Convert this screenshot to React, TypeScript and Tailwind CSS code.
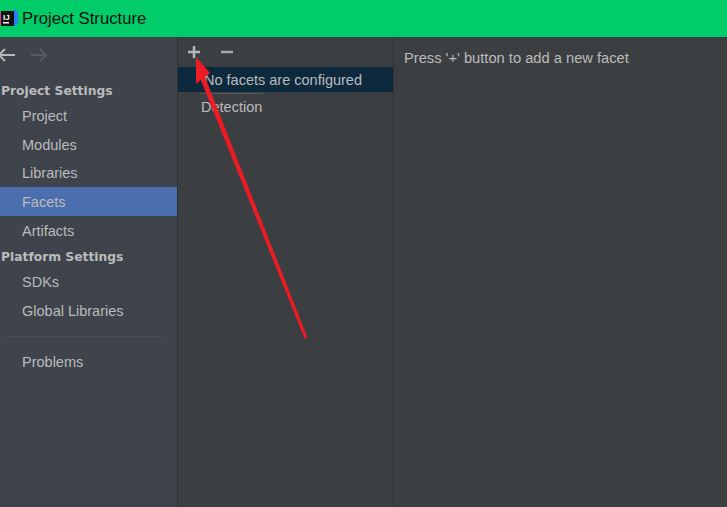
const navRow = 'flex h-[28.67px] items-center pl-[22px] pt-[2px]'
const heading = "flex items-center pl-px font-['DejaVu_Sans'] text-[12.3px] font-bold text-[#bbbbbb]"

function AppIcon() {
	return (
		<svg width="26" height="37" viewBox="0 0 26 37" className="shrink-0">
			<path d="M0 14 L3 12 L3 26 L0 24 Z" fill="#e8416f" />
			<path d="M13 10 H16 L18 13 V23 L15 26 H13 Z" fill="#2d7cf6" />
			<rect x="1" y="11" width="13" height="15" fill="#111" />
			<text x="3" y="19.5" fontSize="8" fontWeight="700" fill="#fff" fontFamily="Liberation Sans">IJ</text>
			<rect x="3" y="22" width="6" height="1.5" fill="#fff" />
		</svg>
	)
}

function Sidebar() {
	return (
		<aside className="flex w-[178px] shrink-0 flex-col border-r border-[#2f3133] bg-[#3e434c]">
			<div className="flex h-[43px] items-start gap-[14px] pt-[11px]">
				<svg width="17" height="14" viewBox="0 0 17 14" fill="none" stroke="#b4b6b8" strokeWidth="2" className="-ml-[2px]">
					<path d="M17 7 H1 M7 1 L1 7 L7 13" />
				</svg>
				<svg width="17" height="14" viewBox="0 0 17 14" fill="none" stroke="#585b5e" strokeWidth="2" className="ml-[2px]">
					<path d="M0 7 H15 M9 1 L15 7 L9 13" />
				</svg>
			</div>
			<div className={`${heading} h-[21.5px]`}>Project Settings</div>
			<div className="flex flex-col">
				<div className={navRow}>Project</div>
				<div className={navRow}>Modules</div>
				<div className={navRow}>Libraries</div>
				<div className={`${navRow} bg-[#4b6eaf]`}>Facets</div>
				<div className={navRow}>Artifacts</div>
			</div>
			<div className={`${heading} h-[23px] pt-[2px]`}>Platform Settings</div>
			<div className="flex flex-col">
				<div className={navRow}>SDKs</div>
				<div className={navRow}>Global Libraries</div>
			</div>
			<div className="mx-[4px] mb-[11px] mt-[10.5px] h-px w-[160px] bg-[#4a4d50]" />
			<div className={navRow}>Problems</div>
		</aside>
	)
}

function FacetList() {
	return (
		<section className="flex w-[216px] shrink-0 flex-col border-r border-[#323232]">
			<div className="flex h-[30px] items-center gap-[19px] pl-[9px]">
				<svg width="14" height="14" viewBox="0 0 14 14" stroke="#b4b6b8" strokeWidth="2.5">
					<path d="M7 1 V13 M1 7 H13" />
				</svg>
				<svg width="14" height="14" viewBox="0 0 14 14" stroke="#a6a8aa" strokeWidth="2.5">
					<path d="M1 7 H13" />
				</svg>
			</div>
			<div className="flex h-[25px] items-center bg-[#0d293e] pl-[26px] pt-[3px]">No facets are configured</div>
			<div className="ml-[22px] mt-px h-px w-[63px] bg-[#55585a]" />
			<div className="flex h-[27px] items-center pl-[23px]">Detection</div>
		</section>
	)
}

export default function App() {
	return (
		<div className="relative flex h-[507px] w-[727px] flex-col overflow-hidden bg-[#3c3f41] font-['Liberation_Sans',sans-serif] text-[14.5px] text-[#bbbbbb]">
			<header className="flex h-[37px] shrink-0 items-center bg-[#00cc6a] text-[16.7px] text-[#111111]">
				<AppIcon />
				<span className="-ml-[4px]">Project Structure</span>
			</header>
			<div className="flex flex-1">
				<Sidebar />
				<FacetList />
				<main className="flex-1 pl-[10px] pt-[10px] text-[14.7px]">Press '+' button to add a new facet</main>
			</div>
			<svg width="727" height="507" className="absolute left-0 top-0">
				<path d="M307.5 337.5 L304.5 338.5 L200 78 L204.5 76 Z" fill="#ed1c24" />
				<path d="M196 57 L196 84 L210 73 Z" fill="#ed1c24" />
			</svg>
		</div>
	)
}
